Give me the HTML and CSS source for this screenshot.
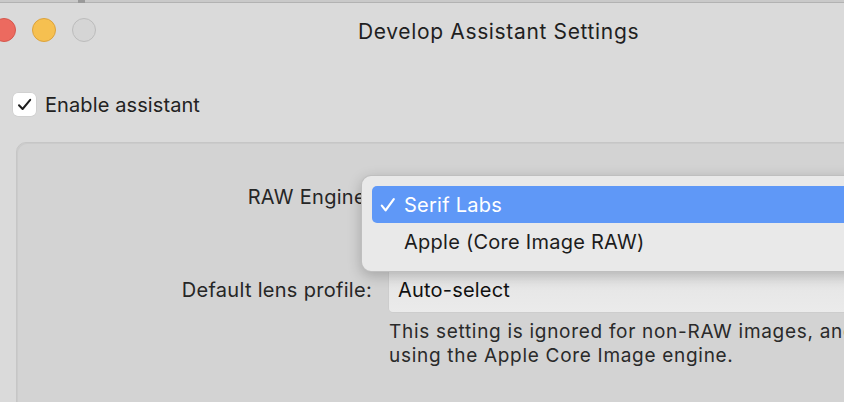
FILE: index.html
```html
<!DOCTYPE html>
<html>
<head>
<meta charset="utf-8">
<link rel="stylesheet" href="styles.css">
</head>
<body>
<div class="window">
  <div class="topedge"><span class="tab"></span></div>
  <div class="titlebar">
    <div class="lights">
      <span class="light red"></span>
      <span class="light yellow"></span>
      <span class="light gray"></span>
    </div>
    <div class="title">Develop Assistant Settings</div>
  </div>
  <div class="content">
    <label class="check-row">
      <span class="checkbox">
        <svg width="23" height="23" viewBox="0 0 23 23"><path d="M6 12.2 L9.6 16 L17.2 6.8" fill="none" stroke="#1e1e1e" stroke-width="2" stroke-linecap="round" stroke-linejoin="round"/></svg>
      </span>
      <span class="check-label">Enable assistant</span>
    </label>
    <div class="panel">
      <div class="form">
        <div class="label row1">RAW Engine:</div>
        <div class="control row1"><div class="popbtn"></div></div>
        <div class="label row2">Default lens profile:</div>
        <div class="control row2"><div class="field">Auto-select</div></div>
        <div class="spacer"></div>
        <div class="help">This setting is ignored for non-RAW images, and<br>using the Apple Core Image engine.</div>
      </div>
    </div>
  </div>
  <div class="menu">
    <div class="item selected">
      <svg class="tick" width="16" height="16" viewBox="0 0 16 16"><path d="M1.8 8.6 L5.6 13.4 L13.8 2.2" fill="none" stroke="#fff" stroke-width="2.2" stroke-linecap="round" stroke-linejoin="round"/></svg>
      <span>Serif Labs</span>
    </div>
    <div class="item"><span>Apple (Core Image RAW)</span></div>
  </div>
</div>
</body>
</html>
```
FILE: styles.css
```css
html, body {
  margin: 0;
  padding: 0;
}
body {
  font-family: Inter, "Noto Sans", "DejaVu Sans", sans-serif;
  color: #252525;
  background: #dadada;
}
.window {
  position: relative;
  width: 844px;
  height: 402px;
  overflow: hidden;
  background: #dadada;
}
.topedge {
  position: relative;
  height: 2px;
  background: #c9c9c9;
  border-bottom: 1px solid #b2b2b2;
}
.tab {
  position: absolute;
  left: 78px;
  top: 0;
  width: 7px;
  height: 3px;
  background: #9a9a9a;
}
.titlebar {
  height: 56px;
  display: flex;
  align-items: center;
}
.lights {
  display: flex;
  gap: 16px;
  margin-left: -8px;
  margin-top: -2px;
}
.light {
  width: 22px;
  height: 22px;
  border-radius: 50%;
  display: block;
}
.red { background: #ec6a5f; border: 1px solid #d5574d; }
.yellow { background: #f6c050; border: 1px solid #dca23c; }
.gray { background: #d5d5d5; border: 1px solid #bcbcbc; }
.title {
  margin-left: 262px;
  font-size: 21px;
  color: #1f1f1f;
  letter-spacing: 0.65px;
}
.content {
  padding-left: 13px;
}
.check-row {
  margin-top: 34px;
  display: flex;
  align-items: center;
  gap: 9px;
  height: 23px;
}
.checkbox {
  width: 23px;
  height: 23px;
  border-radius: 5px;
  background: #ffffff;
  box-shadow: 0 0 0 0.5px rgba(0,0,0,0.08);
  display: block;
}
.checkbox svg { display: block; }
.check-label {
  font-size: 20px;
  color: #222;
  letter-spacing: 0.1px;
}
.panel {
  margin-top: 26px;
  margin-left: 3px;
  width: 1000px;
  height: 400px;
  background: #d3d3d3;
  border: 1px solid #c6c6c6;
  border-radius: 10px;
  box-shadow: inset 1px 1px 0 #cbcbcb;
}
.form {
  display: grid;
  grid-template-columns: 355px 1fr;
  column-gap: 17px;
  padding-top: 36px;
}
.label {
  text-align: right;
  font-size: 20px;
  letter-spacing: 0.3px;
  color: #262626;
  display: flex;
  align-items: center;
  justify-content: flex-end;
}
.row1 { height: 36px; }
.row2 { height: 45px; margin-top: 52px; }
.popbtn {
  height: 36px;
}
.field {
  height: 45px;
  box-sizing: border-box;
  padding-left: 9px;
  display: flex;
  align-items: center;
  font-size: 20px;
  letter-spacing: 0.2px;
  color: #111;
  background: linear-gradient(#e3e3e3, #ebebeb);
  border-radius: 4px;
  box-shadow: 0 0 0 0.5px rgba(0,0,0,0.06);
}
.help {
  margin-top: 8px;
  font-size: 19px;
  letter-spacing: 0.7px;
  line-height: 24px;
  color: #2a2a2a;
  white-space: nowrap;
}
.menu {
  position: absolute;
  left: 361px;
  top: 175px;
  width: 600px;
  height: 97px;
  box-sizing: border-box;
  padding: 10px 0 0 10px;
  background: #e9e9e9;
  border: 1px solid rgba(0,0,0,0.18);
  border-radius: 10px;
  box-shadow: 0 4px 14px rgba(0,0,0,0.22);
}
.item {
  height: 37px;
  display: flex;
  align-items: center;
  padding-left: 32px;
  position: relative;
  font-size: 20px;
  letter-spacing: 0.25px;
  color: #1c1c1c;
  border-radius: 5px;
}
.item.selected {
  background: #5f98f7;
  color: #ffffff;
}
.tick {
  position: absolute;
  left: 8px;
  top: 11px;
}
```
